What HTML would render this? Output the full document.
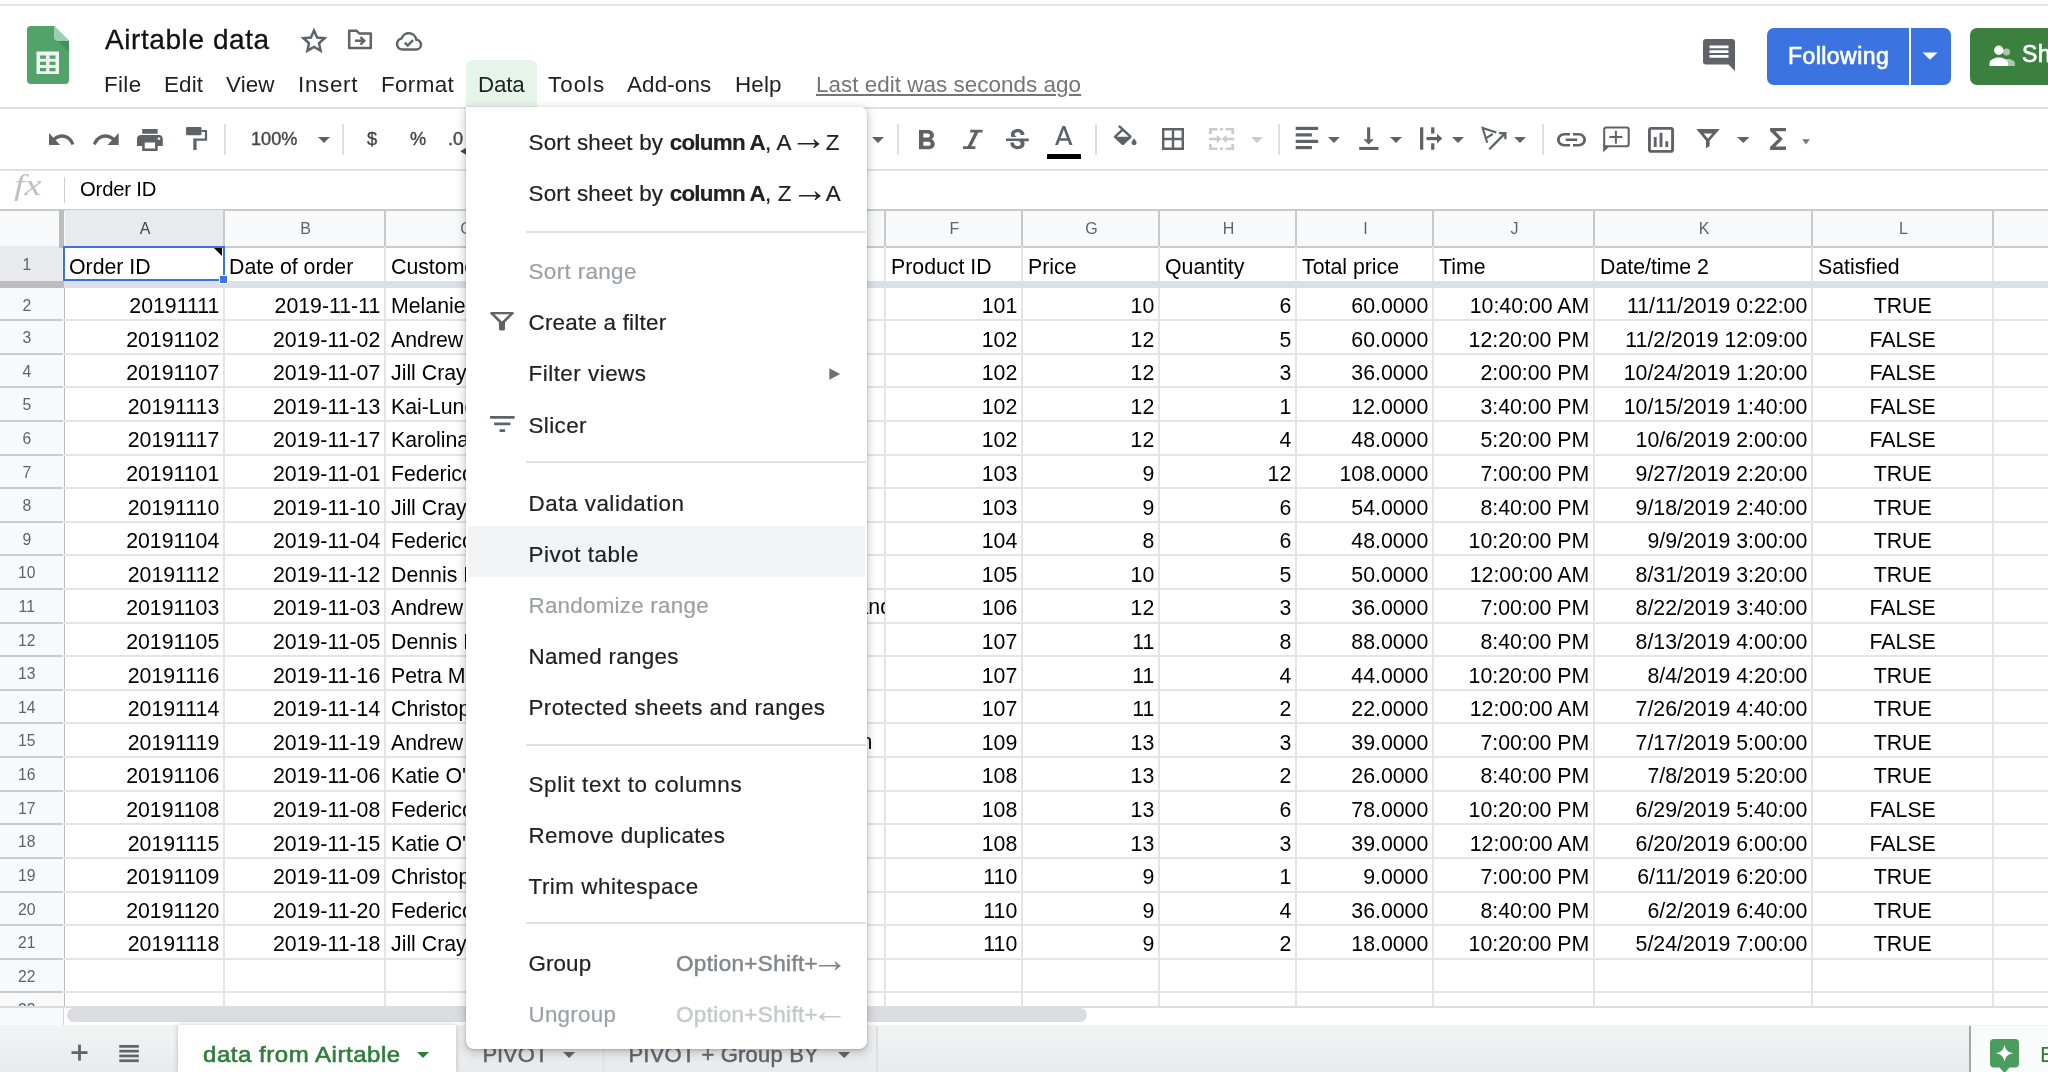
<!DOCTYPE html>
<html lang="en">
<head>
<meta charset="utf-8">
<title>Airtable data - Google Sheets</title>
<style>
*{box-sizing:border-box;margin:0;padding:0}
html,body{width:2048px;height:1072px;overflow:hidden;background:#fff}
body{position:relative;font-family:"Liberation Sans",Arial,sans-serif;color:#202124}
.abs{position:absolute}
#root{position:absolute;left:0;top:0;width:2048px;height:1072px;overflow:hidden;will-change:transform}
/* ---------- header ---------- */
#topline{position:absolute;left:0;top:4px;width:2048px;height:2px;background:#e3e5e9}
#hdrline{position:absolute;left:0;top:107px;width:2048px;height:2px;background:#dfe1e5}
#tbline{position:absolute;left:0;top:169px;width:2048px;height:2px;background:#dfe1e5}
#title{position:absolute;left:105px;top:22px;font-size:28px;line-height:36px;color:#111;letter-spacing:0.58px;-webkit-text-stroke:0.3px #111;white-space:nowrap}
.mi{position:absolute;top:70px;height:30px;line-height:30px;font-size:22.4px;color:#202124;white-space:nowrap;letter-spacing:-0.2px}
#datahl{position:absolute;left:466px;top:60px;width:71px;height:48px;background:#e6f4ea;border-radius:7px 7px 0 0}
#lastedit{position:absolute;left:816px;top:70px;height:30px;line-height:30px;font-size:22.4px;color:#757575;text-decoration:underline;white-space:nowrap;letter-spacing:0.05px}
/* ---------- toolbar ---------- */
.sep{position:absolute;top:124px;width:2px;height:31px;background:#dcdee2}
.tbt{position:absolute;top:125px;height:28px;line-height:28px;font-size:18.2px;color:#444;white-space:nowrap;-webkit-text-stroke:0.35px #444}
.ic{position:absolute;overflow:visible}
/* ---------- formula bar ---------- */
#fx{position:absolute;left:14px;top:167px;font-family:"Liberation Serif",serif;font-style:italic;font-size:30px;line-height:36px;color:#c0c0c0;transform:scaleX(1.27);transform-origin:0 50%}
#fxsep{position:absolute;left:64px;top:177px;width:1px;height:26px;background:#d0d0d0}
#fxtext{position:absolute;left:80px;top:175px;font-size:20.3px;line-height:28px;color:#000;white-space:nowrap;letter-spacing:-0.2px}
/* ---------- grid ---------- */
#grid{position:absolute;left:0;top:0;width:2048px;height:1007px;overflow:hidden}
#colhdr{position:absolute;left:0;top:208.5px;width:2048px;height:39px;background:#f8f9fa;border-top:2px solid #cacaca;border-bottom:2px solid #cacaca}
.ch{position:absolute;top:210px;height:36px;border-right:2px solid #c9c9c9;text-align:center;font-size:16px;line-height:37px;color:#5f6368;padding-left:2px}
.ch.sel{background:#e8eaed;color:#44474a}
#rowhdr{position:absolute;left:0;top:246px;width:64.5px;height:770px;background:#f8f9fa;border-right:1.5px solid #b9b9b9}
.hlh{position:absolute;left:0;width:63px;height:2px;background:#cbcbcb;z-index:1}
.rh{position:absolute;left:0;width:63px;text-align:center;font-size:15.7px;color:#5f6368;background:#f8f9fa}
.rh span{position:absolute;left:0;right:9.5px;top:0;height:100%;display:block}
.rh.sel{background:#e8eaed;width:63.5px}
.rh.sel span{right:10px}
.vl{position:absolute;top:246px;width:2px;height:762px;background:#e4e4e4;margin-left:-1px}
.hl{position:absolute;left:64px;width:1984px;height:2px;background:#e4e4e4}
.c{position:absolute;height:33.6px;line-height:35px;font-size:21.3px;color:#000;white-space:nowrap;overflow:hidden;padding:0 4.7px 0 5px}
.c.ar{text-align:right}.c.al{text-align:left}.c.ac{text-align:center}
#frozenh{position:absolute;left:0;top:280.5px;width:2048px;height:7.5px;background:#dadfe8}
#frozenh2{position:absolute;left:0;top:280.5px;width:64px;height:7.5px;background:#bdbdbd}
#frozenv{position:absolute;left:58.5px;top:209.5px;width:5.5px;height:38.5px;background:#bdbdbd}
#frozenv2{display:none}
#selbox{position:absolute;left:63px;top:245.5px;width:162px;height:35px;border:2px solid #3b73e0;z-index:2}
#selhandle{position:absolute;left:218.5px;top:274.5px;width:9.5px;height:9.5px;background:#3b73e0;border:1.5px solid #fff;z-index:3}
#note{position:absolute;left:214px;top:248px;width:0;height:0;border-top:8.5px solid #000;border-left:8.5px solid transparent;z-index:3}
/* ---------- bottom ---------- */
#gridend{position:absolute;left:0;top:1006px;width:2048px;height:2px;background:#dcdcdc}
#sbtrack{position:absolute;left:0;top:1008px;width:2048px;height:17px;background:#fff}
#sbcorner{position:absolute;left:0;top:1008px;width:64px;height:17px;background:#f8f9fa;border-right:1.5px solid #d8d8d8}
#sbthumb{position:absolute;left:67px;top:1007.5px;width:1020px;height:14.5px;border-radius:7px;background:#dadce0}
#bottombar{position:absolute;left:0;top:1025px;width:2048px;height:47px;background:linear-gradient(#f2f3f5,#e9eaec)}
#tab1{position:absolute;left:178px;top:1025px;width:278px;height:47px;background:#fff;box-shadow:0 0 5px rgba(0,0,0,.22)}
.tabt{position:absolute;top:1037.5px;height:34px;line-height:34px;font-size:22px;white-space:nowrap}
#explore{position:absolute;left:1969px;top:1026px;width:79px;height:46px;background:#fafbfb;border-left:2px solid #a6a6a6}
/* ---------- menu ---------- */
#menu{position:absolute;left:466px;top:107px;width:401px;height:942px;background:#fff;border-radius:0 6px 8px 8px;box-shadow:0 3px 10px 2px rgba(60,64,67,.22),0 1px 3px rgba(60,64,67,.28);z-index:10;overflow:hidden}
.m{-webkit-text-stroke:0.2px;position:absolute;left:0;width:400px;height:51px;line-height:51px;padding-left:62.5px;font-size:22.4px;color:#202124;white-space:nowrap;letter-spacing:0.1px}
.m.dis{color:#9aa0a6}
.m.hov{background:#f1f3f4;left:1.5px;width:397.5px;padding-left:61px}
.m b{font-weight:bold;letter-spacing:-0.75px}
.arw{font-size:36.5px;line-height:10px;letter-spacing:0;position:relative;top:0.5px;font-weight:normal;margin:0 -7.6px 0 -6.6px;-webkit-text-stroke:0}
.msep{position:absolute;left:60px;width:340px;height:2px;background:#dfe1e5}
.sc{position:absolute;right:25.6px;top:0;color:#80868b;font-weight:normal;letter-spacing:0.4px;-webkit-text-stroke:0.5px #80868b}
.m.dis .sc{color:#c6c9cc;-webkit-text-stroke:0.5px #c6c9cc}
.arr{position:absolute;right:26px;top:-1px;color:#6b6e72;font-size:13px}
</style>
</head>
<body>
<div id="root">
<div id="topline"></div>
<!-- ================= HEADER ================= -->
<svg class="ic" style="left:27px;top:25.5px" width="42" height="58" viewBox="0 0 42 58">
  <defs><linearGradient id="fold" x1="0" y1="0" x2="1" y2="1"><stop offset="0" stop-color="#3f8a57"/><stop offset="1" stop-color="#4fa26a" stop-opacity="0"/></linearGradient></defs>
  <path d="M4 0H27L42 15V54a4 4 0 0 1-4 4H4a4 4 0 0 1-4-4V4a4 4 0 0 1 4-4z" fill="#51a36a"/>
  <path d="M27 11L42 26V15z" fill="#3f8a57" opacity=".75"/>
  <path d="M27 0L42 15H31a4 4 0 0 1-4-4z" fill="#9ccfae"/>
  <path d="M9.5 25.5h22.5v22.5H9.500zM13 29.500v3.200h6v-3.200zM22.500 29.500v3.200h6v-3.200zM13 35.800v3.200h6v-3.200zM22.500 35.800v3.200h6v-3.200zM13 42v3.200h6V42zM22.500 42v3.200h6V42z" fill="#f1f1f1" fill-rule="evenodd"/>
</svg>
<div id="title">Airtable data</div>
<!-- star -->
<svg class="ic" style="left:301px;top:28px" width="26" height="25" viewBox="0 0 26 25"><path d="M13 2.600l3.100 6.900 7.500.8-5.600 5 1.600 7.400L13 18.900l-6.600 3.800L8 15.300l-5.600-5 7.500-.8z" fill="none" stroke="#5f6368" stroke-width="2.500" stroke-linejoin="miter"/></svg>
<!-- move-to-folder -->
<svg class="ic" style="left:347px;top:29px" width="26" height="22" viewBox="0 0 26 22"><path d="M2.200 1.800h7.500l2.600 2.700h11.500v14.600H2.200z" fill="none" stroke="#5f6368" stroke-width="2.500" stroke-linejoin="round"/><path d="M8 11.800h8.500M13.500 8l3.800 3.800-3.800 3.800" fill="none" stroke="#5f6368" stroke-width="2.400"/></svg>
<!-- cloud done -->
<svg class="ic" style="left:395px;top:30px" width="28" height="21" viewBox="0 0 28 21"><path d="M7.500 19.500a5.600 5.600 0 0 1-.9-11.100 7.600 7.600 0 0 1 14.700 1.300 4.900 4.900 0 0 1-.4 9.800z" fill="none" stroke="#5f6368" stroke-width="2.500" stroke-linejoin="round"/><path d="M9.800 12.700l2.900 2.900 5.400-5.400" fill="none" stroke="#5f6368" stroke-width="2.400"/></svg>

<div id="datahl"></div>
<div class="mi" style="left:104px;letter-spacing:0.35px">File</div>
<div class="mi" style="left:164px;letter-spacing:0.13px">Edit</div>
<div class="mi" style="left:226px;letter-spacing:0.13px">View</div>
<div class="mi" style="left:298px;letter-spacing:0.7px">Insert</div>
<div class="mi" style="left:381px;letter-spacing:0.35px">Format</div>
<div class="mi" style="left:478px;letter-spacing:-0.2px">Data</div>
<div class="mi" style="left:548px;letter-spacing:1.0px">Tools</div>
<div class="mi" style="left:627px;letter-spacing:0.13px">Add-ons</div>
<div class="mi" style="left:735px;letter-spacing:0.13px">Help</div>
<div id="lastedit">Last edit was seconds ago</div>

<!-- comment icon -->
<svg class="ic" style="left:1703px;top:39px" width="32" height="32" viewBox="0 0 32 32"><path d="M3 0h26a3 3 0 0 1 3 3v29l-6.500-6.500H3a3 3 0 0 1-3-3V3a3 3 0 0 1 3-3z" fill="#5f6368"/><path d="M6.500 6.500h19v2.700h-19zM6.500 11.300h19v2.700h-19zM6.500 16.100h19v2.700h-19z" fill="#fff"/></svg>
<!-- following button -->
<div class="abs" style="left:1767px;top:28px;width:184px;height:57px;background:#3b73e0;border-radius:7px"></div>
<div class="abs" style="left:1908.500px;top:28px;width:2px;height:57px;background:#fff"></div>
<div class="abs" style="left:1788px;top:38px;height:36px;line-height:36px;font-size:23px;color:#fff;letter-spacing:0.45px;-webkit-text-stroke:0.7px #fff;white-space:nowrap">Following</div>
<svg class="ic" style="left:1922px;top:52px" width="16" height="8" viewBox="0 0 16 8"><path d="M0.500 0.500h15L8 7.800z" fill="#fff"/></svg>
<!-- share button -->
<div class="abs" style="left:1970px;top:28px;width:90px;height:57px;background:#3c8040;border-radius:7px"></div>
<svg class="ic" style="left:1989px;top:44px" width="28" height="24" viewBox="0 0 28 24"><circle cx="17.500" cy="8" r="3.600" fill="#a5c9a8"/><path d="M12 22v-2.500c0-3 4-4.500 7-4.500s7 1.500 7 4.500V22z" fill="#a5c9a8"/><circle cx="9.800" cy="6.200" r="4.700" fill="#fff"/><path d="M0.500 22v-3c0-3.800 6-5.600 9.300-5.600s9.300 1.800 9.300 5.600v3z" fill="#fff"/></svg>
<div class="abs" style="left:2022px;top:36px;height:36px;line-height:36px;font-size:23px;color:#fff;letter-spacing:0.45px;-webkit-text-stroke:0.7px #fff;white-space:nowrap">Share</div>
<div id="hdrline"></div>

<!-- ================= TOOLBAR ================= -->
<svg class="ic" style="left:48.7px;top:133.0px" width="25.3" height="12.0" viewBox="2.000 7.000 20.470 9.000" preserveAspectRatio="none"><path d="M12.5 8c-2.65 0-5.05.99-6.9 2.6L2 7v9h9l-3.620-3.620c1.390-1.160 3.160-1.880 5.120-1.880 3.540 0 6.550 2.310 7.600 5.500l2.370-.780C21.080 11.030 17.150 8 12.500 8z" fill="#5f6368"/></svg>
<svg class="ic" style="left:93.3px;top:133.0px" width="25.7" height="12.0" viewBox="1.540 7.000 20.460 9.000" preserveAspectRatio="none"><path d="M18.4 10.6C16.55 8.99 14.15 8 11.5 8c-4.650 0-8.580 3.030-9.960 7.220L3.900 16c1.050-3.190 4.050-5.500 7.600-5.500 1.950 0 3.730.720 5.120 1.880L13 16h9V7l-3.600 3.600z" fill="#5f6368"/></svg>
<svg class="ic" style="left:137.2px;top:128.7px" width="25.8" height="21.9" viewBox="2.000 3.000 20.000 18.000" preserveAspectRatio="none"><path d="M19 8H5c-1.660 0-3 1.340-3 3v6h4v4h12v-4h4v-6c0-1.660-1.340-3-3-3zm-3 11H8v-5h8v5zm3-7c-.550 0-1-.450-1-1s.450-1 1-1 1 .450 1 1-.450 1-1 1zm-1-9H6v4h12V3z" fill="#5f6368"/></svg>
<div class="sep" style="left:224px"></div>
<div class="tbt" style="left:251px">100%</div>
<svg class="ic" style="left:318.0px;top:137.0px" width="12.0" height="6.0" viewBox="0.000 0.000 12.000 6.000" preserveAspectRatio="none"><path d="M0 0h12L6 6z" fill="#5f6368"/></svg>
<div class="sep" style="left:342px"></div>
<div class="tbt" style="left:367px">$</div>
<div class="tbt" style="left:410px">%</div>
<div class="tbt" style="left:448px">.0</div>
<svg class="ic" style="left:872.0px;top:137.0px" width="12.0" height="6.0" viewBox="0.000 0.000 12.000 6.000" preserveAspectRatio="none"><path d="M0 0h12L6 6z" fill="#5f6368"/></svg>
<div class="sep" style="left:897px"></div>
<svg class="ic" style="left:919.0px;top:129.8px" width="15.7" height="19.2" viewBox="7.000 4.000 10.750 14.000" preserveAspectRatio="none"><path d="M15.6 10.79c.97-.67 1.65-1.77 1.65-2.79 0-2.260-1.750-4-4-4H7v14h7.040c2.090 0 3.710-1.700 3.710-3.790 0-1.520-.860-2.820-2.150-3.420zM10 6.500h3c.830 0 1.500.670 1.500 1.500s-.670 1.500-1.500 1.500h-3v-3zm3.500 9H10v-3h3.500c.830 0 1.500.670 1.500 1.500s-.670 1.500-1.500 1.500z" fill="#5f6368"/></svg>
<svg class="ic" style="left:1006.0px;top:129.3px" width="22.8" height="20.2" viewBox="3.000 3.000 18.000 15.010" preserveAspectRatio="none"><path d="M7.24 8.75c-.26-.48-.39-1.03-.39-1.67 0-.610.130-1.160.400-1.670.260-.500.630-.930 1.110-1.290.480-.350 1.050-.630 1.700-.830.660-.190 1.390-.290 2.180-.290.810 0 1.540.110 2.210.340.660.220 1.230.540 1.690.940.470.400.830.880 1.080 1.430.250.550.380 1.150.380 1.810h-3.010c0-.310-.050-.590-.150-.850-.090-.270-.240-.490-.440-.680-.200-.190-.450-.330-.750-.440-.300-.100-.660-.160-1.060-.160-.390 0-.740.040-1.030.130-.290.090-.530.210-.720.360-.190.160-.340.340-.440.550-.100.210-.150.430-.150.660 0 .480.250.880.740 1.210.380.250.770.480 1.410.700H7.390c-.050-.080-.110-.170-.150-.250zM21 12v-2H3v2h9.620c.180.070.400.140.550.200.370.170.660.340.870.510.210.170.350.360.430.570.070.200.110.430.110.690 0 .230-.050.450-.140.660-.090.200-.230.380-.420.530-.190.150-.420.260-.710.350-.290.080-.630.130-1.010.130-.430 0-.830-.040-1.180-.130s-.660-.230-.910-.420c-.250-.190-.450-.440-.590-.750-.140-.310-.250-.760-.250-1.210H6.400c0 .550.080 1.130.240 1.580.160.450.370.850.650 1.210.280.350.600.660.980.920.370.260.780.480 1.220.650.440.170.900.300 1.380.390.480.080.960.130 1.440.130.800 0 1.530-.090 2.180-.280s1.210-.450 1.670-.790c.460-.340.820-.770 1.070-1.270s.380-1.070.380-1.710c0-.600-.100-1.140-.310-1.610-.050-.110-.110-.230-.170-.330H21z" fill="#5f6368"/></svg>
<svg class="ic" style="left:1054.5px;top:125.8px" width="17.5" height="18.9" viewBox="5.500 3.000 12.990 14.000" preserveAspectRatio="none"><path d="M11 3L5.5 17h2.25l1.12-3h6.25l1.120 3h2.250L13 3h-2zm-1.380 9L12 5.670 14.380 12H9.620z" fill="#5f6368"/></svg>
<div class="abs" style="left:1047px;top:153.5px;width:33.5px;height:5.5px;background:#000"></div>
<div class="sep" style="left:1095px"></div>
<svg class="ic" style="left:1113.8px;top:125.0px" width="22.6" height="20.0" viewBox="2.997 0.000 18.003 17.000" preserveAspectRatio="none"><path d="M16.56 8.94L7.62 0 6.21 1.41l2.38 2.38-5.150 5.150c-.590.590-.590 1.540 0 2.120l5.500 5.500c.290.290.680.440 1.060.440s.770-.150 1.060-.440l5.500-5.500c.590-.580.590-1.530 0-2.120zM5.210 10L10 5.210 14.790 10H5.210zM19 11.500s-2 2.170-2 3.500c0 1.100.900 2 2 2s2-.900 2-2c0-1.330-2-3.500-2-3.500z" fill="#5f6368"/></svg>
<svg class="ic" style="left:1162.0px;top:128.0px" width="22.0" height="22.0" viewBox="3.000 3.000 18.000 18.000" preserveAspectRatio="none"><path d="M3 3v18h18V3H3zm8 16H5v-6h6v6zm0-8H5V5h6v6zm8 8h-6v-6h6v6zm0-8h-6V5h6v6z" fill="#5f6368"/></svg>
<svg class="ic" style="left:1209.4px;top:128.0px" width="25.2" height="22.0" viewBox="3.000 3.000 18.000 18.000" preserveAspectRatio="none"><path d="M3 3h6v2H5v3H3zM11 3h2v2h-2zM15 3h6v5h-2V5h-4zM3 16h2v3h4v2H3zM11 19h2v2h-2zM15 19h4v-3h2v5h-6zM3 11h5.500V8.500L12 12l-3.500 3.500V13H3zM21 11h-5.500V8.500L12 12l3.500 3.500V13H21z" fill="#c9cbce"/></svg>
<svg class="ic" style="left:1251.0px;top:137.0px" width="12.0" height="6.0" viewBox="0.000 0.000 12.000 6.000" preserveAspectRatio="none"><path d="M0 0h12L6 6z" fill="#c9cbce"/></svg>
<div class="sep" style="left:1278px"></div>
<svg class="ic" style="left:1327.8px;top:137.0px" width="11.8" height="6.0" viewBox="0.000 0.000 12.000 6.000" preserveAspectRatio="none"><path d="M0 0h12L6 6z" fill="#5f6368"/></svg>
<svg class="ic" style="left:1390.0px;top:137.0px" width="12.0" height="6.0" viewBox="0.000 0.000 12.000 6.000" preserveAspectRatio="none"><path d="M0 0h12L6 6z" fill="#5f6368"/></svg>
<svg class="ic" style="left:1452.0px;top:137.0px" width="12.0" height="6.0" viewBox="0.000 0.000 12.000 6.000" preserveAspectRatio="none"><path d="M0 0h12L6 6z" fill="#5f6368"/></svg>
<svg class="ic" style="left:1514.0px;top:137.0px" width="12.0" height="6.0" viewBox="0.000 0.000 12.000 6.000" preserveAspectRatio="none"><path d="M0 0h12L6 6z" fill="#5f6368"/></svg>
<div class="sep" style="left:1542px"></div>
<svg class="ic" style="left:1556.6px;top:132.8px" width="29.0" height="13.5" viewBox="2.000 7.000 20.000 10.000" preserveAspectRatio="none"><path d="M3.9 12c0-1.71 1.39-3.1 3.1-3.1h4V7H7c-2.760 0-5 2.240-5 5s2.240 5 5 5h4v-1.900H7c-1.710 0-3.100-1.390-3.100-3.100zM8 13h8v-2H8v2zm9-6h-4v1.900h4c1.710 0 3.100 1.390 3.100 3.100s-1.390 3.100-3.100 3.100h-4V17h4c2.760 0 5-2.240 5-5s-2.240-5-5-5z" fill="#5f6368"/></svg>
<svg class="ic" style="left:1648.0px;top:126.7px" width="26.0" height="25.8" viewBox="3.000 3.000 18.000 18.000" preserveAspectRatio="none"><path d="M9 17H7v-7h2v7zm4 0h-2V7h2v10zm4 0h-2v-4h2v4zm2 2H5V5h14v14zm0-16H5c-1.100 0-2 .900-2 2v14c0 1.100.900 2 2 2h14c1.100 0 2-.900 2-2V5c0-1.100-.900-2-2-2z" fill="#5f6368"/></svg>
<svg class="ic" style="left:1736.5px;top:137.0px" width="12.5" height="6.0" viewBox="0.000 0.000 12.000 6.000" preserveAspectRatio="none"><path d="M0 0h12L6 6z" fill="#5f6368"/></svg>
<svg class="ic" style="left:0;top:110px" width="2048" height="60" viewBox="0 110 2048 60">
<g fill="#5f6368">
<!-- paint format -->
<rect x="186" y="127" width="15.5" height="8.2" rx="1.3"/>
<path d="M201.300 129.900H207.100V140.800H196.600V150.100H193.300V138.600H204.900V132.100H201.300z"/>
<!-- italic -->
<path d="M970.200 129.800H982.600V132.600H978.300L971.400 146.200H975.400V149H963V146.200H967.600L974.500 132.600H970.200z"/>
<!-- align left -->
<rect x="1295.700" y="126.800" width="22.400" height="3.200"/><rect x="1295.700" y="133.300" width="16.200" height="3.200"/>
<rect x="1295.700" y="139.800" width="22.400" height="3.200"/><rect x="1295.700" y="146" width="16.200" height="3.200"/>
<!-- valign bottom -->
<rect x="1367.100" y="127.300" width="3.100" height="12.500"/><path d="M1363.500 139.300h10.400l-5.200 5.100z"/><rect x="1359.200" y="146.900" width="19.300" height="3.100"/>
<!-- wrap overflow -->
<rect x="1420" y="127.300" width="3.300" height="22.400"/><rect x="1431.100" y="127.300" width="3.300" height="6.300"/><rect x="1431.100" y="143.300" width="3.300" height="6.400"/>
<rect x="1426.500" y="137" width="11.500" height="3.200"/><path d="M1437 133.700l5.300 4.900-5.300 4.900z"/>
<!-- funnel (toolbar) -->
<path d="M1696.300 129H1719.800L1709.600 140.700V146.300L1706 148.200V140.700zM1703.600 133.400L1707.900 138.600 1712.300 133.400z" fill-rule="evenodd"/>
<!-- sigma -->
<path d="M1770.100 127.900H1786V131.200H1775.400L1782.800 138.900 1775.400 146.600H1786V149.900H1770.100V146.900L1778.100 138.900 1770.100 130.900z"/>
</g>
<path d="M1802.200 139.200h7.600l-3.800 5.400z" fill="#777"/>
<path d="M460.200 151.200L466.500 147.400V155z" fill="#444"/>
<g fill="none" stroke="#5f6368" stroke-width="2.100">
<!-- text rotate -->
<path d="M1487.200 142.700L1482.600 128 1496.300 132.600M1485.700 138.300L1492.700 134" stroke-linejoin="miter" stroke-linecap="butt"/>
<path d="M1489.300 149.200L1504.800 133.600M1499 133.100H1505.400V139.200" stroke-width="2.300"/>
<!-- add comment -->
<path d="M1604.200 146.200V129.500a2 2 0 0 1 2-2h20.500a2 2 0 0 1 2 2v14.700a2 2 0 0 1-2 2H1608z" stroke-linejoin="round"/>
<path d="M1609.400 137.100h13M1615.900 130.700v13" stroke-width="2"/>
</g>
<path d="M1603.200 145.500v7l6.300-6.300z" fill="#5f6368"/>
</svg>
<div id="tbline"></div>

<!-- ================= FORMULA BAR ================= -->
<div id="fx">fx</div>
<div id="fxsep"></div>
<div id="fxtext">Order ID</div>

<!-- ================= GRID ================= -->
<div id="grid">
<div id="colhdr"></div>
<div id="rowhdr"></div>
<div class="vl" style="left:224px"></div>
<div class="vl" style="left:385px"></div>
<div class="vl" style="left:545px"></div>
<div class="vl" style="left:705px"></div>
<div class="vl" style="left:885px"></div>
<div class="vl" style="left:1022px"></div>
<div class="vl" style="left:1159px"></div>
<div class="vl" style="left:1296px"></div>
<div class="vl" style="left:1433px"></div>
<div class="vl" style="left:1594px"></div>
<div class="vl" style="left:1812px"></div>
<div class="vl" style="left:1993px"></div>
<div class="hl" style="top:319px"></div>
<div class="hl" style="top:353px"></div>
<div class="hl" style="top:386px"></div>
<div class="hl" style="top:420px"></div>
<div class="hl" style="top:454px"></div>
<div class="hl" style="top:487px"></div>
<div class="hl" style="top:521px"></div>
<div class="hl" style="top:554px"></div>
<div class="hl" style="top:588px"></div>
<div class="hl" style="top:622px"></div>
<div class="hl" style="top:655px"></div>
<div class="hl" style="top:689px"></div>
<div class="hl" style="top:722px"></div>
<div class="hl" style="top:756px"></div>
<div class="hl" style="top:790px"></div>
<div class="hl" style="top:823px"></div>
<div class="hl" style="top:857px"></div>
<div class="hl" style="top:891px"></div>
<div class="hl" style="top:924px"></div>
<div class="hl" style="top:958px"></div>
<div class="hl" style="top:991px"></div>
<div class="ch sel" style="left:65px;width:160px"><span>A</span></div>
<div class="ch" style="left:225px;width:161px"><span>B</span></div>
<div class="ch" style="left:386px;width:160px"><span>C</span></div>
<div class="ch" style="left:886px;width:137px"><span>F</span></div>
<div class="ch" style="left:1023px;width:137px"><span>G</span></div>
<div class="ch" style="left:1160px;width:137px"><span>H</span></div>
<div class="ch" style="left:1297px;width:137px"><span>I</span></div>
<div class="ch" style="left:1434px;width:161px"><span>J</span></div>
<div class="ch" style="left:1595px;width:218px"><span>K</span></div>
<div class="ch" style="left:1813px;width:181px"><span>L</span></div>
<div class="ch" style="left:1994px;width:167px"><span>M</span></div>
<div class="ch" style="left:546px;width:160px"><span>D</span></div>
<div class="ch" style="left:706px;width:180px"><span>E</span></div>
<div class="rh sel" style="top:246px;height:35px;line-height:38.5px"><span>1</span></div>
<div class="rh" style="top:288.2px;height:33.6px;line-height:36.2px"><span>2</span></div>
<div class="hlh" style="top:319px"></div>
<div class="rh" style="top:320.2px;height:33.6px;line-height:36.2px"><span>3</span></div>
<div class="hlh" style="top:353px"></div>
<div class="rh" style="top:353.7px;height:33.6px;line-height:36.2px"><span>4</span></div>
<div class="hlh" style="top:386px"></div>
<div class="rh" style="top:387.2px;height:33.6px;line-height:36.2px"><span>5</span></div>
<div class="hlh" style="top:420px"></div>
<div class="rh" style="top:421.2px;height:33.6px;line-height:36.2px"><span>6</span></div>
<div class="hlh" style="top:454px"></div>
<div class="rh" style="top:454.7px;height:33.6px;line-height:36.2px"><span>7</span></div>
<div class="hlh" style="top:487px"></div>
<div class="rh" style="top:488.2px;height:33.6px;line-height:36.2px"><span>8</span></div>
<div class="hlh" style="top:521px"></div>
<div class="rh" style="top:521.7px;height:33.6px;line-height:36.2px"><span>9</span></div>
<div class="hlh" style="top:554px"></div>
<div class="rh" style="top:555.2px;height:33.6px;line-height:36.2px"><span>10</span></div>
<div class="hlh" style="top:588px"></div>
<div class="rh" style="top:589.2px;height:33.6px;line-height:36.2px"><span>11</span></div>
<div class="hlh" style="top:622px"></div>
<div class="rh" style="top:622.7px;height:33.6px;line-height:36.2px"><span>12</span></div>
<div class="hlh" style="top:655px"></div>
<div class="rh" style="top:656.2px;height:33.6px;line-height:36.2px"><span>13</span></div>
<div class="hlh" style="top:689px"></div>
<div class="rh" style="top:689.7px;height:33.6px;line-height:36.2px"><span>14</span></div>
<div class="hlh" style="top:722px"></div>
<div class="rh" style="top:723.2px;height:33.6px;line-height:36.2px"><span>15</span></div>
<div class="hlh" style="top:756px"></div>
<div class="rh" style="top:757.2px;height:33.6px;line-height:36.2px"><span>16</span></div>
<div class="hlh" style="top:790px"></div>
<div class="rh" style="top:790.7px;height:33.6px;line-height:36.2px"><span>17</span></div>
<div class="hlh" style="top:823px"></div>
<div class="rh" style="top:824.2px;height:33.6px;line-height:36.2px"><span>18</span></div>
<div class="hlh" style="top:857px"></div>
<div class="rh" style="top:858.2px;height:33.6px;line-height:36.2px"><span>19</span></div>
<div class="hlh" style="top:891px"></div>
<div class="rh" style="top:891.7px;height:33.6px;line-height:36.2px"><span>20</span></div>
<div class="hlh" style="top:924px"></div>
<div class="rh" style="top:925.2px;height:33.6px;line-height:36.2px"><span>21</span></div>
<div class="hlh" style="top:958px"></div>
<div class="rh" style="top:958.7px;height:33.6px;line-height:36.2px"><span>22</span></div>
<div class="hlh" style="top:991px"></div>
<div class="rh" style="top:992.2px;height:33.6px;line-height:36.2px"><span>23</span></div>
<div class="hlh" style="top:1025px"></div>
<div class="c al" style="left:64px;width:160px;top:246px;height:35px;line-height:42.4px">Order ID</div>
<div class="c al" style="left:224px;width:161px;top:246px;height:35px;line-height:42.4px">Date of order</div>
<div class="c al" style="left:386.0px;width:160px;top:246px;height:35px;line-height:42.4px">Customer name</div>
<div class="c al" style="left:886.0px;width:137px;top:246px;height:35px;line-height:42.4px">Product ID</div>
<div class="c al" style="left:1023.0px;width:137px;top:246px;height:35px;line-height:42.4px">Price</div>
<div class="c al" style="left:1160.0px;width:137px;top:246px;height:35px;line-height:42.4px">Quantity</div>
<div class="c al" style="left:1297.0px;width:137px;top:246px;height:35px;line-height:42.4px">Total price</div>
<div class="c al" style="left:1434.0px;width:161px;top:246px;height:35px;line-height:42.4px">Time</div>
<div class="c al" style="left:1595.0px;width:218px;top:246px;height:35px;line-height:42.4px">Date/time 2</div>
<div class="c al" style="left:1813.0px;width:181px;top:246px;height:35px;line-height:42.4px">Satisfied</div>
<div class="c al" style="left:1994.0px;width:167px;top:246px;height:35px;line-height:42.4px"></div>
<div class="c ar" style="left:64px;width:160px;top:289.0px">20191111</div>
<div class="c ar" style="left:224px;width:161px;top:289.0px">2019-11-11</div>
<div class="c al" style="left:386.0px;width:160px;top:289.0px">Melanie Smith</div>
<div class="c ar" style="left:885px;width:137px;top:289.0px">101</div>
<div class="c ar" style="left:1022px;width:137px;top:289.0px">10</div>
<div class="c ar" style="left:1159px;width:137px;top:289.0px">6</div>
<div class="c ar" style="left:1296px;width:137px;top:289.0px">60.0000</div>
<div class="c ar" style="left:1433px;width:161px;top:289.0px">10:40:00 AM</div>
<div class="c ar" style="left:1594px;width:218px;top:289.0px">11/11/2019 0:22:00</div>
<div class="c ac" style="left:1812.0px;width:181px;top:289.0px">TRUE</div>
<div class="c ar" style="left:64px;width:160px;top:322.6px">20191102</div>
<div class="c ar" style="left:224px;width:161px;top:322.6px">2019-11-02</div>
<div class="c al" style="left:386.0px;width:160px;top:322.6px">Andrew Nowak</div>
<div class="c ar" style="left:885px;width:137px;top:322.6px">102</div>
<div class="c ar" style="left:1022px;width:137px;top:322.6px">12</div>
<div class="c ar" style="left:1159px;width:137px;top:322.6px">5</div>
<div class="c ar" style="left:1296px;width:137px;top:322.6px">60.0000</div>
<div class="c ar" style="left:1433px;width:161px;top:322.6px">12:20:00 PM</div>
<div class="c ar" style="left:1594px;width:218px;top:322.6px">11/2/2019 12:09:00</div>
<div class="c ac" style="left:1812.0px;width:181px;top:322.6px">FALSE</div>
<div class="c ar" style="left:64px;width:160px;top:356.2px">20191107</div>
<div class="c ar" style="left:224px;width:161px;top:356.2px">2019-11-07</div>
<div class="c al" style="left:386.0px;width:160px;top:356.2px">Jill Crayford</div>
<div class="c ar" style="left:885px;width:137px;top:356.2px">102</div>
<div class="c ar" style="left:1022px;width:137px;top:356.2px">12</div>
<div class="c ar" style="left:1159px;width:137px;top:356.2px">3</div>
<div class="c ar" style="left:1296px;width:137px;top:356.2px">36.0000</div>
<div class="c ar" style="left:1433px;width:161px;top:356.2px">2:00:00 PM</div>
<div class="c ar" style="left:1594px;width:218px;top:356.2px">10/24/2019 1:20:00</div>
<div class="c ac" style="left:1812.0px;width:181px;top:356.2px">FALSE</div>
<div class="c ar" style="left:64px;width:160px;top:389.8px">20191113</div>
<div class="c ar" style="left:224px;width:161px;top:389.8px">2019-11-13</div>
<div class="c al" style="left:386.0px;width:160px;top:389.8px">Kai-Lung Chen</div>
<div class="c ar" style="left:885px;width:137px;top:389.8px">102</div>
<div class="c ar" style="left:1022px;width:137px;top:389.8px">12</div>
<div class="c ar" style="left:1159px;width:137px;top:389.8px">1</div>
<div class="c ar" style="left:1296px;width:137px;top:389.8px">12.0000</div>
<div class="c ar" style="left:1433px;width:161px;top:389.8px">3:40:00 PM</div>
<div class="c ar" style="left:1594px;width:218px;top:389.8px">10/15/2019 1:40:00</div>
<div class="c ac" style="left:1812.0px;width:181px;top:389.8px">FALSE</div>
<div class="c ar" style="left:64px;width:160px;top:423.4px">20191117</div>
<div class="c ar" style="left:224px;width:161px;top:423.4px">2019-11-17</div>
<div class="c al" style="left:386.0px;width:160px;top:423.4px">Karolina Berg</div>
<div class="c ar" style="left:885px;width:137px;top:423.4px">102</div>
<div class="c ar" style="left:1022px;width:137px;top:423.4px">12</div>
<div class="c ar" style="left:1159px;width:137px;top:423.4px">4</div>
<div class="c ar" style="left:1296px;width:137px;top:423.4px">48.0000</div>
<div class="c ar" style="left:1433px;width:161px;top:423.4px">5:20:00 PM</div>
<div class="c ar" style="left:1594px;width:218px;top:423.4px">10/6/2019 2:00:00</div>
<div class="c ac" style="left:1812.0px;width:181px;top:423.4px">FALSE</div>
<div class="c ar" style="left:64px;width:160px;top:457.0px">20191101</div>
<div class="c ar" style="left:224px;width:161px;top:457.0px">2019-11-01</div>
<div class="c al" style="left:386.0px;width:160px;top:457.0px">Federico Rossi</div>
<div class="c ar" style="left:885px;width:137px;top:457.0px">103</div>
<div class="c ar" style="left:1022px;width:137px;top:457.0px">9</div>
<div class="c ar" style="left:1159px;width:137px;top:457.0px">12</div>
<div class="c ar" style="left:1296px;width:137px;top:457.0px">108.0000</div>
<div class="c ar" style="left:1433px;width:161px;top:457.0px">7:00:00 PM</div>
<div class="c ar" style="left:1594px;width:218px;top:457.0px">9/27/2019 2:20:00</div>
<div class="c ac" style="left:1812.0px;width:181px;top:457.0px">TRUE</div>
<div class="c ar" style="left:64px;width:160px;top:490.6px">20191110</div>
<div class="c ar" style="left:224px;width:161px;top:490.6px">2019-11-10</div>
<div class="c al" style="left:386.0px;width:160px;top:490.6px">Jill Crayford</div>
<div class="c ar" style="left:885px;width:137px;top:490.6px">103</div>
<div class="c ar" style="left:1022px;width:137px;top:490.6px">9</div>
<div class="c ar" style="left:1159px;width:137px;top:490.6px">6</div>
<div class="c ar" style="left:1296px;width:137px;top:490.6px">54.0000</div>
<div class="c ar" style="left:1433px;width:161px;top:490.6px">8:40:00 PM</div>
<div class="c ar" style="left:1594px;width:218px;top:490.6px">9/18/2019 2:40:00</div>
<div class="c ac" style="left:1812.0px;width:181px;top:490.6px">TRUE</div>
<div class="c ar" style="left:64px;width:160px;top:524.2px">20191104</div>
<div class="c ar" style="left:224px;width:161px;top:524.2px">2019-11-04</div>
<div class="c al" style="left:386.0px;width:160px;top:524.2px">Federico Rossi</div>
<div class="c ar" style="left:885px;width:137px;top:524.2px">104</div>
<div class="c ar" style="left:1022px;width:137px;top:524.2px">8</div>
<div class="c ar" style="left:1159px;width:137px;top:524.2px">6</div>
<div class="c ar" style="left:1296px;width:137px;top:524.2px">48.0000</div>
<div class="c ar" style="left:1433px;width:161px;top:524.2px">10:20:00 PM</div>
<div class="c ar" style="left:1594px;width:218px;top:524.2px">9/9/2019 3:00:00</div>
<div class="c ac" style="left:1812.0px;width:181px;top:524.2px">TRUE</div>
<div class="c ar" style="left:64px;width:160px;top:557.8px">20191112</div>
<div class="c ar" style="left:224px;width:161px;top:557.8px">2019-11-12</div>
<div class="c al" style="left:386.0px;width:160px;top:557.8px">Dennis Hall</div>
<div class="c ar" style="left:885px;width:137px;top:557.8px">105</div>
<div class="c ar" style="left:1022px;width:137px;top:557.8px">10</div>
<div class="c ar" style="left:1159px;width:137px;top:557.8px">5</div>
<div class="c ar" style="left:1296px;width:137px;top:557.8px">50.0000</div>
<div class="c ar" style="left:1433px;width:161px;top:557.8px">12:00:00 AM</div>
<div class="c ar" style="left:1594px;width:218px;top:557.8px">8/31/2019 3:20:00</div>
<div class="c ac" style="left:1812.0px;width:181px;top:557.8px">TRUE</div>
<div class="c ar" style="left:64px;width:160px;top:591.4px">20191103</div>
<div class="c ar" style="left:224px;width:161px;top:591.4px">2019-11-03</div>
<div class="c al" style="left:386.0px;width:160px;top:591.4px">Andrew Nowak</div>
<div class="c ar" style="left:885px;width:137px;top:591.4px">106</div>
<div class="c ar" style="left:1022px;width:137px;top:591.4px">12</div>
<div class="c ar" style="left:1159px;width:137px;top:591.4px">3</div>
<div class="c ar" style="left:1296px;width:137px;top:591.4px">36.0000</div>
<div class="c ar" style="left:1433px;width:161px;top:591.4px">7:00:00 PM</div>
<div class="c ar" style="left:1594px;width:218px;top:591.4px">8/22/2019 3:40:00</div>
<div class="c ac" style="left:1812.0px;width:181px;top:591.4px">FALSE</div>
<div class="c ar" style="left:64px;width:160px;top:625.0px">20191105</div>
<div class="c ar" style="left:224px;width:161px;top:625.0px">2019-11-05</div>
<div class="c al" style="left:386.0px;width:160px;top:625.0px">Dennis Hall</div>
<div class="c ar" style="left:885px;width:137px;top:625.0px">107</div>
<div class="c ar" style="left:1022px;width:137px;top:625.0px">11</div>
<div class="c ar" style="left:1159px;width:137px;top:625.0px">8</div>
<div class="c ar" style="left:1296px;width:137px;top:625.0px">88.0000</div>
<div class="c ar" style="left:1433px;width:161px;top:625.0px">8:40:00 PM</div>
<div class="c ar" style="left:1594px;width:218px;top:625.0px">8/13/2019 4:00:00</div>
<div class="c ac" style="left:1812.0px;width:181px;top:625.0px">FALSE</div>
<div class="c ar" style="left:64px;width:160px;top:658.6px">20191116</div>
<div class="c ar" style="left:224px;width:161px;top:658.6px">2019-11-16</div>
<div class="c al" style="left:386.0px;width:160px;top:658.6px">Petra Mayer</div>
<div class="c ar" style="left:885px;width:137px;top:658.6px">107</div>
<div class="c ar" style="left:1022px;width:137px;top:658.6px">11</div>
<div class="c ar" style="left:1159px;width:137px;top:658.6px">4</div>
<div class="c ar" style="left:1296px;width:137px;top:658.6px">44.0000</div>
<div class="c ar" style="left:1433px;width:161px;top:658.6px">10:20:00 PM</div>
<div class="c ar" style="left:1594px;width:218px;top:658.6px">8/4/2019 4:20:00</div>
<div class="c ac" style="left:1812.0px;width:181px;top:658.6px">TRUE</div>
<div class="c ar" style="left:64px;width:160px;top:692.2px">20191114</div>
<div class="c ar" style="left:224px;width:161px;top:692.2px">2019-11-14</div>
<div class="c al" style="left:386.0px;width:160px;top:692.2px">Christopher Lee</div>
<div class="c ar" style="left:885px;width:137px;top:692.2px">107</div>
<div class="c ar" style="left:1022px;width:137px;top:692.2px">11</div>
<div class="c ar" style="left:1159px;width:137px;top:692.2px">2</div>
<div class="c ar" style="left:1296px;width:137px;top:692.2px">22.0000</div>
<div class="c ar" style="left:1433px;width:161px;top:692.2px">12:00:00 AM</div>
<div class="c ar" style="left:1594px;width:218px;top:692.2px">7/26/2019 4:40:00</div>
<div class="c ac" style="left:1812.0px;width:181px;top:692.2px">TRUE</div>
<div class="c ar" style="left:64px;width:160px;top:725.8px">20191119</div>
<div class="c ar" style="left:224px;width:161px;top:725.8px">2019-11-19</div>
<div class="c al" style="left:386.0px;width:160px;top:725.8px">Andrew Nowak</div>
<div class="c ar" style="left:885px;width:137px;top:725.8px">109</div>
<div class="c ar" style="left:1022px;width:137px;top:725.8px">13</div>
<div class="c ar" style="left:1159px;width:137px;top:725.8px">3</div>
<div class="c ar" style="left:1296px;width:137px;top:725.8px">39.0000</div>
<div class="c ar" style="left:1433px;width:161px;top:725.8px">7:00:00 PM</div>
<div class="c ar" style="left:1594px;width:218px;top:725.8px">7/17/2019 5:00:00</div>
<div class="c ac" style="left:1812.0px;width:181px;top:725.8px">TRUE</div>
<div class="c ar" style="left:64px;width:160px;top:759.4px">20191106</div>
<div class="c ar" style="left:224px;width:161px;top:759.4px">2019-11-06</div>
<div class="c al" style="left:386.0px;width:160px;top:759.4px">Katie O'Neil</div>
<div class="c ar" style="left:885px;width:137px;top:759.4px">108</div>
<div class="c ar" style="left:1022px;width:137px;top:759.4px">13</div>
<div class="c ar" style="left:1159px;width:137px;top:759.4px">2</div>
<div class="c ar" style="left:1296px;width:137px;top:759.4px">26.0000</div>
<div class="c ar" style="left:1433px;width:161px;top:759.4px">8:40:00 PM</div>
<div class="c ar" style="left:1594px;width:218px;top:759.4px">7/8/2019 5:20:00</div>
<div class="c ac" style="left:1812.0px;width:181px;top:759.4px">TRUE</div>
<div class="c ar" style="left:64px;width:160px;top:793.0px">20191108</div>
<div class="c ar" style="left:224px;width:161px;top:793.0px">2019-11-08</div>
<div class="c al" style="left:386.0px;width:160px;top:793.0px">Federico Rossi</div>
<div class="c ar" style="left:885px;width:137px;top:793.0px">108</div>
<div class="c ar" style="left:1022px;width:137px;top:793.0px">13</div>
<div class="c ar" style="left:1159px;width:137px;top:793.0px">6</div>
<div class="c ar" style="left:1296px;width:137px;top:793.0px">78.0000</div>
<div class="c ar" style="left:1433px;width:161px;top:793.0px">10:20:00 PM</div>
<div class="c ar" style="left:1594px;width:218px;top:793.0px">6/29/2019 5:40:00</div>
<div class="c ac" style="left:1812.0px;width:181px;top:793.0px">FALSE</div>
<div class="c ar" style="left:64px;width:160px;top:826.6px">20191115</div>
<div class="c ar" style="left:224px;width:161px;top:826.6px">2019-11-15</div>
<div class="c al" style="left:386.0px;width:160px;top:826.6px">Katie O'Neil</div>
<div class="c ar" style="left:885px;width:137px;top:826.6px">108</div>
<div class="c ar" style="left:1022px;width:137px;top:826.6px">13</div>
<div class="c ar" style="left:1159px;width:137px;top:826.6px">3</div>
<div class="c ar" style="left:1296px;width:137px;top:826.6px">39.0000</div>
<div class="c ar" style="left:1433px;width:161px;top:826.6px">12:00:00 AM</div>
<div class="c ar" style="left:1594px;width:218px;top:826.6px">6/20/2019 6:00:00</div>
<div class="c ac" style="left:1812.0px;width:181px;top:826.6px">FALSE</div>
<div class="c ar" style="left:64px;width:160px;top:860.2px">20191109</div>
<div class="c ar" style="left:224px;width:161px;top:860.2px">2019-11-09</div>
<div class="c al" style="left:386.0px;width:160px;top:860.2px">Christopher Lee</div>
<div class="c ar" style="left:885px;width:137px;top:860.2px">110</div>
<div class="c ar" style="left:1022px;width:137px;top:860.2px">9</div>
<div class="c ar" style="left:1159px;width:137px;top:860.2px">1</div>
<div class="c ar" style="left:1296px;width:137px;top:860.2px">9.0000</div>
<div class="c ar" style="left:1433px;width:161px;top:860.2px">7:00:00 PM</div>
<div class="c ar" style="left:1594px;width:218px;top:860.2px">6/11/2019 6:20:00</div>
<div class="c ac" style="left:1812.0px;width:181px;top:860.2px">TRUE</div>
<div class="c ar" style="left:64px;width:160px;top:893.8px">20191120</div>
<div class="c ar" style="left:224px;width:161px;top:893.8px">2019-11-20</div>
<div class="c al" style="left:386.0px;width:160px;top:893.8px">Federico Rossi</div>
<div class="c ar" style="left:885px;width:137px;top:893.8px">110</div>
<div class="c ar" style="left:1022px;width:137px;top:893.8px">9</div>
<div class="c ar" style="left:1159px;width:137px;top:893.8px">4</div>
<div class="c ar" style="left:1296px;width:137px;top:893.8px">36.0000</div>
<div class="c ar" style="left:1433px;width:161px;top:893.8px">8:40:00 PM</div>
<div class="c ar" style="left:1594px;width:218px;top:893.8px">6/2/2019 6:40:00</div>
<div class="c ac" style="left:1812.0px;width:181px;top:893.8px">TRUE</div>
<div class="c ar" style="left:64px;width:160px;top:927.4px">20191118</div>
<div class="c ar" style="left:224px;width:161px;top:927.4px">2019-11-18</div>
<div class="c al" style="left:386.0px;width:160px;top:927.4px">Jill Crayford</div>
<div class="c ar" style="left:885px;width:137px;top:927.4px">110</div>
<div class="c ar" style="left:1022px;width:137px;top:927.4px">9</div>
<div class="c ar" style="left:1159px;width:137px;top:927.4px">2</div>
<div class="c ar" style="left:1296px;width:137px;top:927.4px">18.0000</div>
<div class="c ar" style="left:1433px;width:161px;top:927.4px">10:20:00 PM</div>
<div class="c ar" style="left:1594px;width:218px;top:927.4px">5/24/2019 7:00:00</div>
<div class="c ac" style="left:1812.0px;width:181px;top:927.4px">TRUE</div>
<div class="c" style="left:705px;width:180px;padding:0;text-align:right;top:590.4px;z-index:1"><span style="margin-right:-7px">Nuts and</span></div>
<div class="c ar" style="left:705px;width:172px;top:724.8px">Lemon</div>
<div id="frozenv2"></div>
<div id="frozenh"></div>
<div id="frozenh2"></div>
<div id="frozenv"></div>
<div id="selbox"></div>
<div id="note"></div>
<div id="selhandle"></div>
</div>

<!-- ================= BOTTOM ================= -->
<div id="gridend"></div>
<div id="sbtrack"></div>
<div id="sbcorner"></div>
<div id="sbthumb"></div>
<div id="bottombar"></div>
<div id="tab1"></div>
<div class="abs" style="left:602.5px;top:1026px;width:1.5px;height:46px;background:#dfe0e2"></div>
<div class="abs" style="left:876px;top:1026px;width:1.5px;height:46px;background:#dfe0e2"></div>
<svg class="ic" style="left:0;top:1040px" width="200" height="32" viewBox="0 1040 200 32"><g fill="#606367"><rect x="71.500" y="1051.200" width="16" height="2.800"/><rect x="78.100" y="1044.600" width="2.800" height="16"/><rect x="119.300" y="1045" width="19.500" height="2.700"/><rect x="119.300" y="1049.800" width="19.500" height="2.700"/><rect x="119.300" y="1054.600" width="19.500" height="2.700"/><rect x="119.300" y="1059.400" width="19.500" height="2.700"/></g></svg>
<div class="tabt" style="left:203px;color:#2f7d3b;-webkit-text-stroke:0.6px #2f7d3b;letter-spacing:0.5px;transform:scaleX(1.09);transform-origin:0 50%">data from Airtable</div>
<svg class="ic" style="left:417.0px;top:1052.0px" width="12.0" height="6.0" viewBox="0.000 0.000 12.000 6.000" preserveAspectRatio="none"><path d="M0 0h12L6 6z" fill="#2f7d3b"/></svg>
<div class="tabt" style="left:482.5px;color:#5f6368;-webkit-text-stroke:0.45px #5f6368;letter-spacing:-0.1px">PIVOT</div>
<svg class="ic" style="left:563.4px;top:1052.0px" width="12.2" height="6.0" viewBox="0.000 0.000 12.000 6.000" preserveAspectRatio="none"><path d="M0 0h12L6 6z" fill="#5f6368"/></svg>
<div class="tabt" style="left:628.5px;color:#5f6368;-webkit-text-stroke:0.45px #5f6368;letter-spacing:0.2px">PIVOT + Group BY</div>
<svg class="ic" style="left:837.7px;top:1052.0px" width="12.3" height="6.0" viewBox="0.000 0.000 12.000 6.000" preserveAspectRatio="none"><path d="M0 0h12L6 6z" fill="#5f6368"/></svg>
<div id="explore"></div>
<svg class="ic" style="left:1989.5px;top:1039px" width="29" height="34" viewBox="0 0 29 34"><path d="M4 0h21a4 4 0 0 1 4 4v20.500a4 4 0 0 1-4 4h-5.500L14.500 34 9.500 28.500H4a4 4 0 0 1-4-4V4a4 4 0 0 1 4-4z" fill="#4a9c5f"/><path d="M14.500 5.500c.9 5.400 3.300 7.800 8.700 8.700-5.400.9-7.800 3.300-8.700 8.700-.9-5.400-3.300-7.800-8.700-8.700 5.400-.9 7.800-3.300 8.700-8.700z" fill="#fff"/></svg>
<div class="tabt" style="left:2040px;color:#2f7d3b">Explore</div>

<!-- ================= MENU ================= -->
<div id="menu">
<div class="m " style="top:9.9px;letter-spacing:0.22px">Sort sheet by <b>column A</b>, A <span class="arw">→</span> Z</div>
<div class="m " style="top:61.1px;letter-spacing:0.22px">Sort sheet by <b>column A</b>, Z <span class="arw">→</span> A</div>
<div class="msep" style="top:123.8px"></div>
<div class="m dis" style="top:139.2px;letter-spacing:0.37px">Sort range</div>
<div class="m " style="top:190.3px;letter-spacing:0.23px">Create a filter</div>
<div class="m " style="top:241.4px;letter-spacing:0.5px">Filter views<svg class="ic" style="left:363px;top:19.5px" width="12" height="12" viewBox="0 0 12 12"><path d="M0.300 0.300v11.400L11.300 6z" fill="#6e7175"/></svg></div>
<div class="m " style="top:292.5px;letter-spacing:0.4px">Slicer</div>
<div class="msep" style="top:353.8px"></div>
<div class="m " style="top:371.0px;letter-spacing:0.53px">Data validation</div>
<div class="m hov" style="top:419.0px;height:51.4px;line-height:57.2px;letter-spacing:0.53px">Pivot table</div>
<div class="m dis" style="top:473.2px;letter-spacing:0.24px">Randomize range</div>
<div class="m " style="top:524.3px;letter-spacing:0.28px">Named ranges</div>
<div class="m " style="top:575.4px;letter-spacing:0.39px">Protected sheets and ranges</div>
<div class="msep" style="top:636.5px"></div>
<div class="m " style="top:651.7px;letter-spacing:0.64px">Split text to columns</div>
<div class="m " style="top:702.8px;letter-spacing:0.37px">Remove duplicates</div>
<div class="m " style="top:753.9px;letter-spacing:0.53px">Trim whitespace</div>
<div class="msep" style="top:815.2px"></div>
<div class="m " style="top:831.0px;letter-spacing:0.1px">Group<span class="sc">Option+Shift+<span class="arw">→</span></span></div>
<div class="m dis" style="top:882.1px;letter-spacing:0.25px">Ungroup<span class="sc">Option+Shift+<span class="arw">←</span></span></div>
<svg class="ic" style="left:24.0px;top:205.0px" width="24.0" height="18.5" viewBox="4.038 4.000 15.913 16.000" preserveAspectRatio="none"><path d="M7 6h10l-5.010 6.300L7 6zm-2.750-.390C6.270 8.200 10 13 10 13v6c0 .550.450 1 1 1h2c.550 0 1-.450 1-1v-6s3.720-4.800 5.740-7.390c.510-.660.040-1.610-.790-1.610H5.040c-.830 0-1.300.950-.790 1.610z" fill="#5f6368"/></svg>
<svg class="ic" style="left:24.0px;top:308.6px" width="24.6" height="15.9" viewBox="3.000 6.000 18.000 12.000" preserveAspectRatio="none"><path d="M10 18h4v-2h-4v2zM3 6v2h18V6H3zm3 7h12v-2H6v2z" fill="#5f6368"/></svg>
</div>
</div>
</body>
</html>
